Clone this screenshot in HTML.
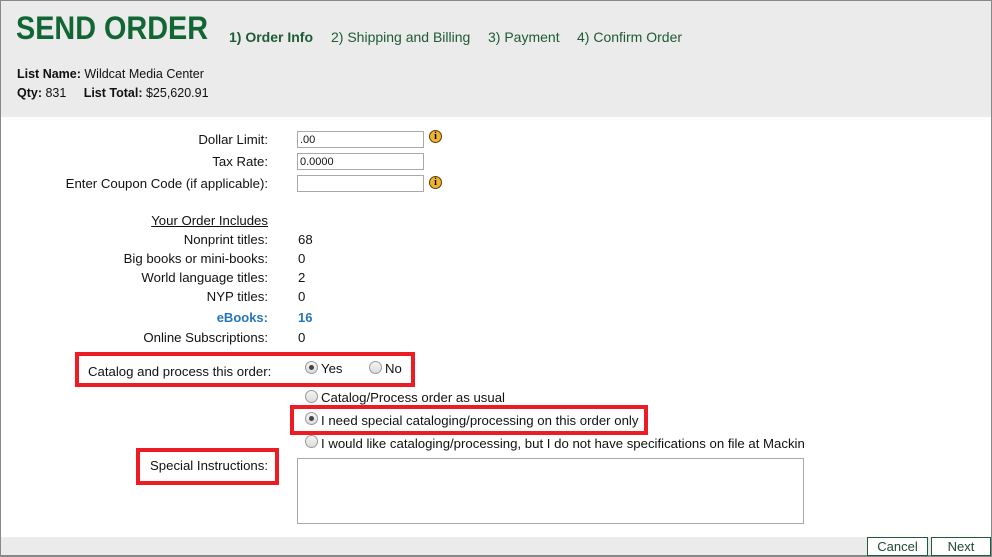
<!DOCTYPE html>
<html><head><meta charset="utf-8"><style>
*{margin:0;padding:0;box-sizing:border-box}
body{width:992px;height:557px;position:relative;overflow:hidden;background:#fff;font-family:"Liberation Sans",Arial,sans-serif;font-size:13.2px;color:#111}
.frame{position:absolute;left:0;top:0;width:992px;height:557px;border:1px solid #888;border-bottom:2px solid #888}
.hdr{position:absolute;left:1px;top:1px;width:990px;height:116px;background:#ebebeb}
.ftr{position:absolute;left:1px;top:537px;width:990px;height:18px;background:#ebebeb}
.a{position:absolute;white-space:nowrap}
.r{position:absolute;right:724px;white-space:nowrap;text-align:right}
.title{left:16px;top:10px;font-size:32px;font-weight:bold;color:#116633;transform:scaleX(0.9);transform-origin:left}
.step{top:29px;font-size:14px;color:#1f5a36}
.inp{position:absolute;left:297px;width:127px;height:17px;border:1px solid #a9a9a9;background:#fff;font-size:11px;padding:2px 2px;line-height:12px}
.info{position:absolute;left:429px;width:13px;height:13px;border-radius:50%;background:#f2b330;border:1px solid #5a3d00;font:bold 10px "Liberation Serif",serif;text-align:center;line-height:11px;color:#000}
.rad{position:absolute;width:13px;height:13px;border-radius:50%;border:1px solid #9a9a9a;background:linear-gradient(#f4f4f4,#dcdcdc)}
.rad.on::after{content:"";position:absolute;left:3px;top:3px;width:5px;height:5px;border-radius:50%;background:#444}
.red{position:absolute;border:4px solid #ed1c24}
.btn{position:absolute;top:537px;height:19px;border:1px solid #1d5c35;background:#fff;font-size:13px;text-align:center;line-height:17px;color:#1d4a30}
.sm{font-size:12.5px}
</style></head><body>
<div class="hdr"></div>
<div class="ftr"></div>
<div class="frame"></div>
<div class="a title">SEND ORDER</div>
<div class="a step" style="left:229px;font-weight:bold">1) Order Info</div>
<div class="a step" style="left:331px">2) Shipping and Billing</div>
<div class="a step" style="left:488px">3) Payment</div>
<div class="a step" style="left:577px">4) Confirm Order</div>
<div class="a sm" style="left:17px;top:67px"><b>List Name:</b> Wildcat Media Center</div>
<div class="a sm" style="left:17px;top:86px"><b>Qty:</b> 831 &nbsp;&nbsp;&nbsp; <b>List Total:</b> $25,620.91</div>

<div class="r" style="top:132px">Dollar Limit:</div>
<div class="r" style="top:154px">Tax Rate:</div>
<div class="r" style="top:176px">Enter Coupon Code (if applicable):</div>
<div class="inp" style="top:131px">.00</div>
<div class="inp" style="top:153px">0.0000</div>
<div class="inp" style="top:175px"></div>
<div class="info" style="top:130px">i</div>
<div class="info" style="top:176px">i</div>

<div class="r" style="top:213px;text-decoration:underline">Your Order Includes</div>
<div class="r" style="top:232px">Nonprint titles:</div>
<div class="r" style="top:251px">Big books or mini-books:</div>
<div class="r" style="top:270px">World language titles:</div>
<div class="r" style="top:289px">NYP titles:</div>
<div class="r" style="top:310px;color:#2577b8;font-weight:bold;font-size:13px">eBooks:</div>
<div class="r" style="top:330px">Online Subscriptions:</div>
<div class="a" style="left:298px;top:232px">68</div>
<div class="a" style="left:298px;top:251px">0</div>
<div class="a" style="left:298px;top:270px">2</div>
<div class="a" style="left:298px;top:289px">0</div>
<div class="a" style="left:298px;top:310px;color:#2577b8;font-weight:bold;font-size:13px">16</div>
<div class="a" style="left:298px;top:330px">0</div>

<div class="red" style="left:75px;top:352px;width:340px;height:35px"></div>
<div class="a" style="left:88px;top:364px">Catalog and process this order:</div>
<div class="rad on" style="left:305px;top:361px"></div>
<div class="a" style="left:321px;top:361px">Yes</div>
<div class="rad" style="left:369px;top:361px"></div>
<div class="a" style="left:385px;top:361px">No</div>

<div class="rad" style="left:305px;top:390px"></div>
<div class="a" style="left:321px;top:390px">Catalog/Process order as usual</div>
<div class="red" style="left:290px;top:405px;width:358px;height:30px"></div>
<div class="rad on" style="left:305px;top:412px"></div>
<div class="a" style="left:321px;top:413px">I need special cataloging/processing on this order only</div>
<div class="rad" style="left:305px;top:435px"></div>
<div class="a" style="left:321px;top:436px">I would like cataloging/processing, but I do not have specifications on file at Mackin</div>

<div class="red" style="left:136px;top:448px;width:143px;height:37px"></div>
<div class="r" style="top:458px">Special Instructions:</div>
<div style="position:absolute;left:297px;top:458px;width:507px;height:66px;border:1px solid #a9a9a9;background:#fff"></div>

<div class="btn" style="left:867px;width:61px">Cancel</div>
<div class="btn" style="left:931px;width:60px">Next</div>
</body></html>
